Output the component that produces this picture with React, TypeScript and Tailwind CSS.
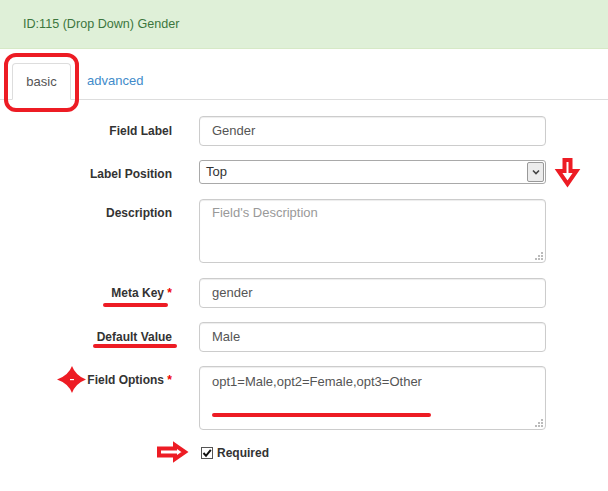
import React from "react";

const RED = "#ed1c24";

const Label: React.FC<{ text: string; required?: boolean; pt: string }> = ({ text, required, pt }) => (
  <div className={`w-[172px] shrink-0 text-right text-[12px] leading-[15px] font-bold text-[#333] ${pt}`}>
    {text}
    {required && <span className="text-[#e00]"> *</span>}
  </div>
);

const ResizeGrip: React.FC = () => (
  <svg className="absolute right-[2px] bottom-[2px]" width="8" height="8" viewBox="0 0 8 8">
    <rect x="6" y="0" width="2" height="2" fill="#bbb" />
    <rect x="3" y="3" width="2" height="2" fill="#bbb" />
    <rect x="6" y="3" width="2" height="2" fill="#bbb" />
    <rect x="0" y="6" width="2" height="2" fill="#bbb" />
    <rect x="3" y="6" width="2" height="2" fill="#bbb" />
    <rect x="6" y="6" width="2" height="2" fill="#bbb" />
  </svg>
);

const inputBox =
  "w-[347px] border border-[#ccc] rounded-[4px] bg-white shadow-[inset_0_1px_1px_rgba(0,0,0,0.075)] text-[13px] text-[#555]";

const App: React.FC = () => {
  return (
    <div className="relative w-[608px] h-[491px] overflow-hidden bg-white font-['Liberation_Sans',Arial,sans-serif]">
      <div className="h-[49px] bg-[#dff0d8] border-b border-[#d6e9c6] px-[23px] flex items-center text-[12.6px] text-[#3c763d]">
        ID:115 (Drop Down) Gender
      </div>

      <div className="mt-[14px] flex items-end border-b border-[#ddd] pl-[12px] text-[13px]">
        <div className="w-[59px] h-[37px] -mb-px border border-[#ddd] border-b-white rounded-t-[4px] bg-white flex items-center justify-center text-[#555]">
          basic
        </div>
        <div className="h-[36px] pl-[16px] flex items-center text-[#428bca]">advanced</div>
      </div>

      <div className="pt-[16px] flex flex-col">
        <div className="flex gap-[27px]">
          <Label text="Field Label" pt="pt-[8px]" />
          <div className={`${inputBox} h-[30px] pl-[12px] flex items-center`}>Gender</div>
        </div>

        <div className="mt-[14px] flex gap-[27px]">
          <Label text="Label Position" pt="pt-[7px]" />
          <div className="w-[347px] h-[24px] border border-[#a9a9a9] rounded-[3px] bg-white flex items-stretch text-[13px] text-[#333]">
            <div className="flex-1 pl-[6px] flex items-center">Top</div>
            <div className="w-[17px] m-px border border-[#999] rounded-[2px] bg-[#ececec] flex items-center justify-center">
              <svg width="8" height="6" viewBox="0 0 8 6">
                <path d="M1 1.5 L4 4.5 L7 1.5" fill="none" stroke="#444" strokeWidth="1.6" />
              </svg>
            </div>
          </div>
        </div>

        <div className="mt-[15px] flex gap-[27px]">
          <Label text="Description" pt="pt-[7px]" />
          <div className={`${inputBox} relative h-[64px] pl-[12px] pt-[3px] text-[#999]`}>
            Field's Description
            <ResizeGrip />
          </div>
        </div>

        <div className="mt-[15px] flex gap-[27px]">
          <Label text="Meta Key" required pt="pt-[8px]" />
          <div className={`${inputBox} h-[30px] pl-[12px] flex items-center`}>gender</div>
        </div>

        <div className="mt-[14px] flex gap-[27px]">
          <Label text="Default Value" pt="pt-[8px]" />
          <div className={`${inputBox} h-[30px] pl-[12px] flex items-center`}>Male</div>
        </div>

        <div className="mt-[14px] flex gap-[27px]">
          <Label text="Field Options" required pt="pt-[7px]" />
          <div className={`${inputBox} relative h-[64px] pl-[12px] pt-[5px]`}>
            opt1=Male,opt2=Female,opt3=Other
            <ResizeGrip />
          </div>
        </div>

        <div className="mt-[14px] pl-[201px] flex items-center gap-[4px]">
          <div className="w-[12px] h-[12px] border border-[#555] bg-white flex items-center justify-center">
            <svg width="10" height="10" viewBox="0 0 10 10">
              <path d="M1.5 5 L4 7.8 L8.8 1.8" fill="none" stroke="#111" strokeWidth="2" />
            </svg>
          </div>
          <span className="text-[12px] font-bold text-[#333]">Required</span>
        </div>
      </div>

      <svg className="absolute inset-0 pointer-events-none" width="608" height="491" viewBox="0 0 608 491">
        <rect x="6" y="55" width="71" height="55" rx="10" fill="none" stroke={RED} strokeWidth="4" />
        <path
          d="M564.5 160 L570.5 160 L570.5 171 L576.5 171 L567.5 184 L558.5 171 L564.5 171 Z"
          fill="#fff"
          stroke={RED}
          strokeWidth="4"
          strokeLinejoin="miter"
        />
        <line x1="105" y1="305" x2="166" y2="305" stroke={RED} strokeWidth="4" strokeLinecap="round" />
        <line x1="95" y1="346" x2="175" y2="346" stroke={RED} strokeWidth="4" strokeLinecap="round" />
        <line x1="214" y1="415" x2="429" y2="415" stroke={RED} strokeWidth="4" strokeLinecap="round" />
        <path
          d="M72 366 Q75.5 375.5 86 379.5 Q75.5 383.5 72 393 Q68.5 383.5 57 379.5 Q68.5 375.5 72 366 Z"
          fill={RED}
        />
        <rect x="70" y="379" width="4" height="1.2" fill="#fff" />
        <path
          d="M159 448.5 L175 448.5 L175 445 L185 452 L175 459 L175 455.5 L159 455.5 Z"
          fill="#fff"
          stroke={RED}
          strokeWidth="4"
        />
      </svg>
    </div>
  );
};

export default App;
